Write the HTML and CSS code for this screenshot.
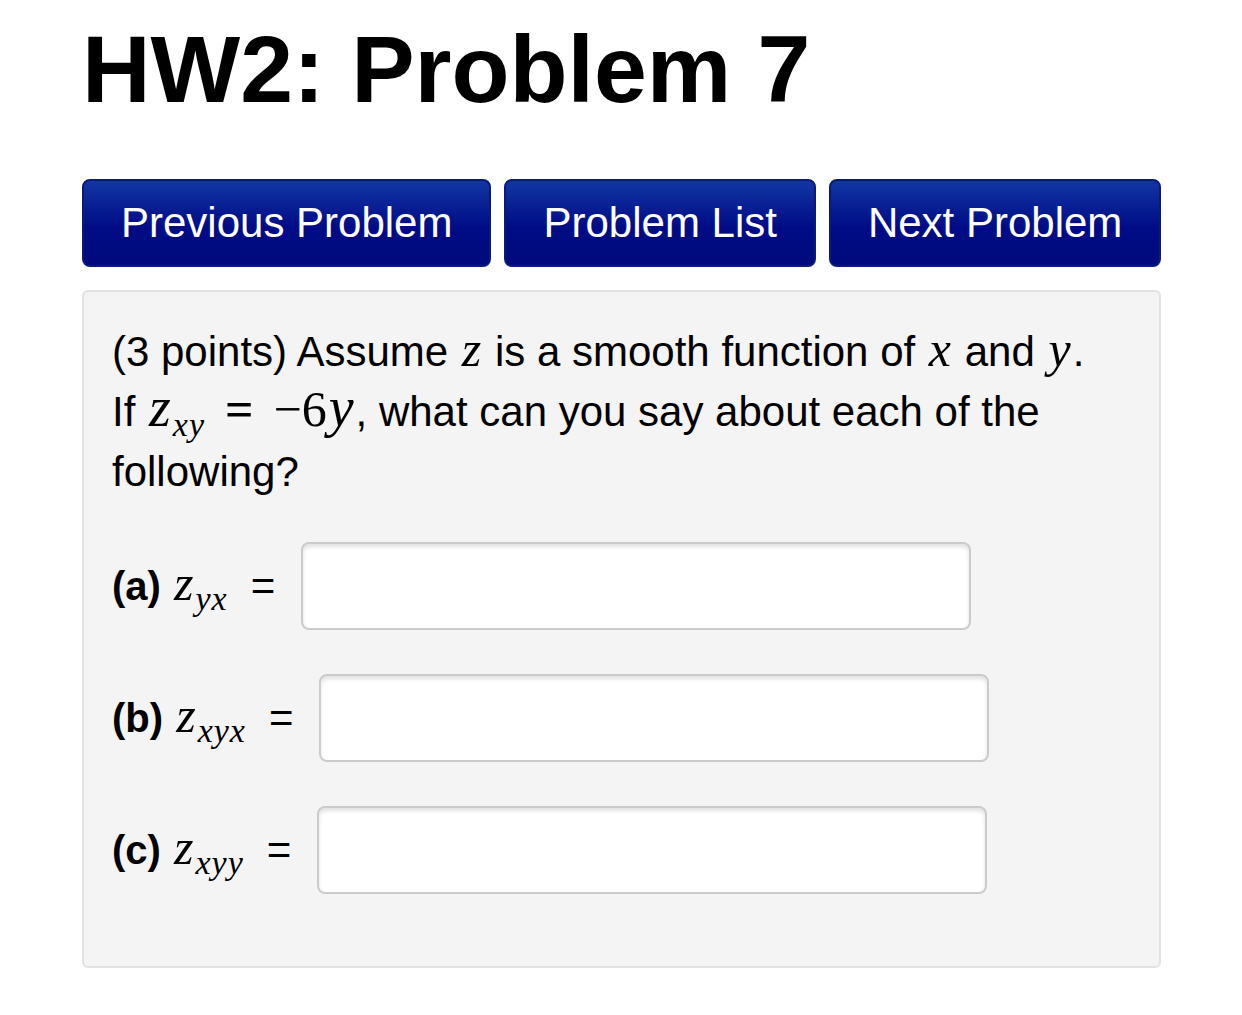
FILE: index.html
```html
<!DOCTYPE html>
<html lang="en">
  <head>
    <meta charset="UTF-8" />
    <meta name="viewport" content="width=device-width, initial-scale=1.0" />
    <title>HW2: Problem 7</title>
    <link rel="stylesheet" href="styles.css">
  </head>
  <body>
    <div class="page">
      <h1 class="title">HW2: Problem 7</h1>
      <div class="nav">
        <a class="navBtn" href="#">Previous Problem</a>
        <a class="navBtn" href="#">Problem List</a>
        <a class="navBtn" href="#">Next Problem</a>
      </div>
      <div class="problem">
        <p class="statement">
          (3 points) Assume <span class="mi">z</span> is a smooth function of <span class="mi">x</span> and <span class="mi">y</span>.<br />
          If <span class="math"><span class="mi">z</span><span class="sub">xy</span><span class="mo">=</span><span class="mn">&minus;6</span><span class="mi">y</span></span>, what can you say about each of the
          following?
        </p>
        <div class="answer">
          <span class="label"><b>(a)</b> <span class="mi">z</span><span class="sub">yx</span></span>
          <span class="eq">=</span>
          <input class="field" type="text" />
        </div>
        <div class="answer">
          <span class="label"><b>(b)</b> <span class="mi">z</span><span class="sub">xyx</span></span>
          <span class="eq">=</span>
          <input class="field" type="text" />
        </div>
        <div class="answer">
          <span class="label"><b>(c)</b> <span class="mi">z</span><span class="sub">xyy</span></span>
          <span class="eq">=</span>
          <input class="field" type="text" />
        </div>
      </div>
    </div>
  </body>
</html>
```

FILE: styles.css
```css
body {
  margin: 0;
  background: #fff;
  font-family: "Liberation Sans", Arial, sans-serif;
  color: #000;
}
.page {
  padding: 14px 0 0 82px;
  width: 1079px;
}
.title {
  margin: 0 0 55px 0;
  font-size: 95px;
  line-height: 110px;
  font-weight: bold;
}
.nav {
  display: flex;
  gap: 13px;
}
.navBtn {
  flex: none;
  display: flex;
  align-items: center;
  height: 84px;
  padding: 0 37px;
  border: 2px solid #0a1a78;
  border-radius: 8px;
  background: linear-gradient(#1236a3, #000c86 55%, #000a7c);
  color: #fff;
  font-size: 42px;
  white-space: nowrap;
  text-decoration: none;
}
.problem {
  margin-top: 23px;
  padding: 30px 28px 72px 28px;
  background: #f4f4f4;
  border: 2px solid #e2e2e2;
  border-radius: 6px;
}
.statement {
  margin: 0 0 40px 0;
  font-size: 42px;
  line-height: 60px;
}
.mi {
  font-family: "Liberation Serif", "Times New Roman", serif;
  font-style: italic;
  font-size: 50px;
  line-height: 0;
  padding: 0 2px;
}
.math .mi {
  font-size: 56px;
}
.mn,
.mo {
  font-family: "Liberation Serif", "Times New Roman", serif;
  font-size: 50px;
  line-height: 0;
}
.mo {
  margin: 0 20px;
  font-weight: bold;
}
.sub {
  font-family: "Liberation Serif", "Times New Roman", serif;
  font-style: italic;
  font-size: 34px;
  vertical-align: -10px;
  line-height: 0;
  letter-spacing: 1px;
}
.answer {
  display: flex;
  align-items: center;
  height: 88px;
  margin-bottom: 44px;
  font-size: 40px;
}
.answer:last-child {
  margin-bottom: 0;
}
.label {
  white-space: pre;
}
.eq {
  margin-left: 23px;
  font-size: 42px;
}
.field {
  box-sizing: border-box;
  margin-left: 26px;
  width: 670px;
  height: 88px;
  border: 2px solid #cbcbcb;
  border-radius: 8px;
  background: #fff;
  box-shadow: inset 0 3px 4px rgba(0, 0, 0, 0.12);
  font-size: 40px;
}
```
